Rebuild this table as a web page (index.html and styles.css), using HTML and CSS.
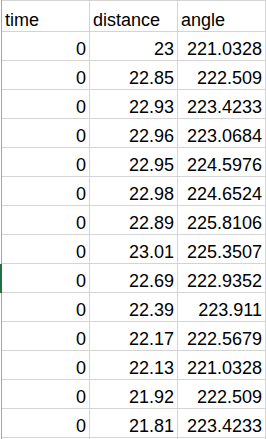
FILE: index.html
```html
<!DOCTYPE html>
<html>
<head>
<meta charset="utf-8">
<link rel="stylesheet" href="styles.css">
</head>
<body>
<div class="sheet">
  <div class="gutter"></div><div class="cell head text">time</div><div class="cell head text">distance</div><div class="cell head text">angle</div>
  <div class="gutter"></div><div class="cell">0</div><div class="cell">23</div><div class="cell">221.0328</div>
  <div class="gutter"></div><div class="cell">0</div><div class="cell">22.85</div><div class="cell">222.509</div>
  <div class="gutter"></div><div class="cell">0</div><div class="cell">22.93</div><div class="cell">223.4233</div>
  <div class="gutter"></div><div class="cell">0</div><div class="cell">22.96</div><div class="cell">223.0684</div>
  <div class="gutter"></div><div class="cell">0</div><div class="cell">22.95</div><div class="cell">224.5976</div>
  <div class="gutter"></div><div class="cell">0</div><div class="cell">22.98</div><div class="cell">224.6524</div>
  <div class="gutter"></div><div class="cell">0</div><div class="cell">22.89</div><div class="cell">225.8106</div>
  <div class="gutter"></div><div class="cell">0</div><div class="cell">23.01</div><div class="cell">225.3507</div>
  <div class="gutter active"></div><div class="cell">0</div><div class="cell">22.69</div><div class="cell">222.9352</div>
  <div class="gutter"></div><div class="cell">0</div><div class="cell">22.39</div><div class="cell">223.911</div>
  <div class="gutter"></div><div class="cell">0</div><div class="cell">22.17</div><div class="cell">222.5679</div>
  <div class="gutter"></div><div class="cell">0</div><div class="cell">22.13</div><div class="cell">221.0328</div>
  <div class="gutter"></div><div class="cell">0</div><div class="cell">21.92</div><div class="cell">222.509</div>
  <div class="gutter"></div><div class="cell">0</div><div class="cell">21.81</div><div class="cell">223.4233</div>
  <div class="gutter"></div><div class="cell tail"></div><div class="cell tail"></div><div class="cell tail"></div>
</div>
</body>
</html>
```
FILE: styles.css
```css
html, body {
  margin: 0;
  padding: 0;
  background: #ffffff;
}

.sheet {
  display: grid;
  grid-template-columns: 2px 88px 88px 88px;
  grid-template-rows: 32px repeat(14, 29px) 1px;
  font-family: "Liberation Sans", Arial, sans-serif;
  font-size: 18px;
  line-height: 20px;
  color: #000000;
}

.gutter {
  box-sizing: border-box;
  border-right: 1px solid #a6a6a6;
  background: #ffffff;
}

.gutter.active {
  background: #217346;
  border-right-color: #217346;
}

.cell {
  box-sizing: border-box;
  border-right: 1px solid #d4d4d4;
  border-bottom: 1px solid #d4d4d4;
  display: flex;
  align-items: flex-end;
  justify-content: flex-end;
  padding: 0 3px 1px 3px;
  white-space: nowrap;
  overflow: hidden;
}

.cell.head {
  border-top: 1px solid #d4d4d4;
}

.cell.text {
  justify-content: flex-start;
}

.cell.tail {
  border-bottom: none;
  padding: 0;
}
```
